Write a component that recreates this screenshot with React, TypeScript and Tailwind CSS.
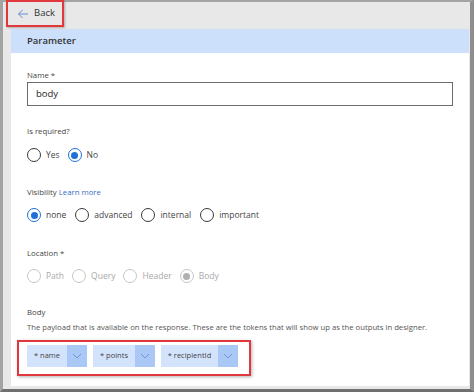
import React from "react";

const Radio = ({
  label,
  checked = false,
  disabled = false,
}: {
  label: string;
  checked?: boolean;
  disabled?: boolean;
}) => (
  <div className="flex items-center gap-[5px]">
    <span
      className={`flex h-[14px] w-[14px] items-center justify-center rounded-full border ${
        disabled
          ? "border-[#c6c6c6]"
          : checked
          ? "border-[#1e6fd9]"
          : "border-[#3a3a3a]"
      }`}
    >
      {checked && (
        <span
          className={`h-[7px] w-[7px] rounded-full ${
            disabled ? "bg-[#b0b0b0]" : "bg-[#1e6fd9]"
          }`}
        />
      )}
    </span>
    <span className={disabled ? "text-[#a8a8a8]" : "text-[#444]"}>{label}</span>
  </div>
);

const Chip = ({ label, w }: { label: string; w: string }) => (
  <div className="flex h-[22px]">
    <div className={`flex items-center justify-center bg-[#d3e3fc] text-[#444] ${w}`}>
      {label}
    </div>
    <div className="flex w-[20px] items-center justify-center bg-[#a9c8f5]">
      <svg width="10" height="6" viewBox="0 0 10 6" fill="none">
        <path d="M1 1l4 4 4-4" stroke="#6a90d6" strokeWidth="0.9" />
      </svg>
    </div>
  </div>
);

const App = () => {
  return (
    <div
      className="flex h-[392px] w-[474px] flex-col border-t-2 border-l-[3px] border-r-[4px] border-b-[3px] border-t-[#a3a3a3] border-l-[#a3a3a3] border-r-[#8e8e8e] border-b-[#6f6f6f] bg-[#e8e8e8] text-[8.5px]"
      style={{ fontFamily: '"Open Sans", "Noto Sans", sans-serif' }}
    >
      <div className="flex h-[27px] shrink-0 items-start pl-[3px]">
        <div className="mt-[-2px] flex h-[27px] w-[58px] items-center gap-[5px] border-2 border-[#e0383c] pl-[9px] shadow-[1px_1px_2px_rgba(0,0,0,0.25)]">
          <svg width="12" height="10" viewBox="0 0 12 10" fill="none">
            <path d="M11 5H1.5M5.5 1L1.5 5l4 4" stroke="#6a8ad8" strokeWidth="1" />
          </svg>
          <span className="text-[9.5px] text-[#333]">Back</span>
        </div>
      </div>

      <div className="ml-[8px] mr-[1px] flex flex-1 flex-col bg-white">
        <div className="flex h-[24px] items-center bg-[#cde0fb] pl-4 text-[9.5px] font-semibold text-[#333]">
          Parameter
        </div>

        <div className="flex flex-col px-4 pt-[16px] text-[#444]">
          <div className="h-[12px] text-[7.8px] leading-[12px]">Name *</div>
          <div className="mt-[1px] flex h-[24px] items-center border-[1.5px] border-[#6b6b6b] pl-[8px] text-[9.5px] text-[#222]">
            body
          </div>

          <div className="mt-[19px] h-[12px] text-[7.8px] leading-[12px]">Is required?</div>
          <div className="mt-[10px] flex h-[16px] items-center gap-[8px]">
            <Radio label="Yes" />
            <Radio label="No" checked />
          </div>

          <div className="mt-[23px] h-[12px] text-[7.8px] leading-[12px]">
            Visibility <span className="text-[#3b6cc4]">Learn more</span>
          </div>
          <div className="mt-[9px] flex h-[16px] items-center gap-[9px]">
            <Radio label="none" checked />
            <Radio label="advanced" />
            <Radio label="internal" />
            <Radio label="important" />
          </div>

          <div className="mt-[24px] h-[12px] text-[7.8px] leading-[12px]">Location *</div>
          <div className="mt-[9px] flex h-[16px] items-center gap-[8px]">
            <Radio label="Path" disabled />
            <Radio label="Query" disabled />
            <Radio label="Header" disabled />
            <Radio label="Body" checked disabled />
          </div>

          <div className="mt-[22px] h-[12px] text-[7.8px] leading-[12px]">Body</div>
          <div className="mt-[3px] h-[12px] whitespace-nowrap text-[7.7px] leading-[12px] text-[#555]">
            The payload that is available on the response. These are the tokens that will show up as the outputs in designer.
          </div>

          <div className="ml-[-10px] mt-[7px] flex h-[36px] w-[234px] items-start gap-[6px] border-2 border-[#e0383c] pl-[8px] pt-[3px] text-[7.5px] shadow-[1px_1px_3px_rgba(0,0,0,0.3)]">
            <Chip label="* name" w="w-[40px]" />
            <Chip label="* points" w="w-[42px]" />
            <Chip label="* recipientId" w="w-[57px]" />
          </div>
        </div>
      </div>
      <div className="h-[3px] shrink-0" />
    </div>
  );
};

export default App;
